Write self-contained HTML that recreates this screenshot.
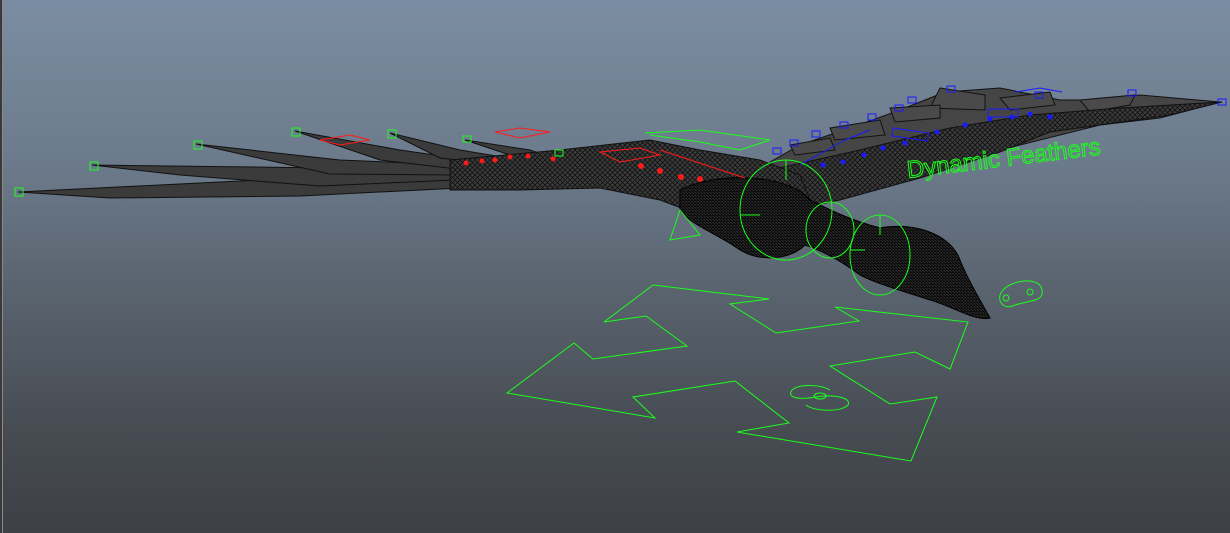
<!DOCTYPE html>
<html><head><meta charset="utf-8"><style>
html,body{margin:0;padding:0;width:1230px;height:533px;overflow:hidden}
body{background:linear-gradient(#7b8da2 0%,#6c7b8c 30%,#59636e 55%,#474c53 80%,#3d4045 100%);position:relative}
.l1{position:absolute;left:0;top:0;width:2px;height:533px;background:#3a3a3a}
.l2{position:absolute;left:2px;top:0;width:1px;height:533px;background:#8a8a8a}
svg{position:absolute;left:0;top:0}
</style></head><body>
<div class="l1"></div><div class="l2"></div>
<svg width="1230" height="533" viewBox="0 0 1230 533">
<defs>
<pattern id="mesh" width="5" height="5" patternUnits="userSpaceOnUse">
<rect width="5" height="5" fill="#3c3c3c"/><path d="M0 0L5 5M0 5L5 0" stroke="#111" stroke-width="0.8"/>
</pattern>
<pattern id="mesh2" width="3" height="3" patternUnits="userSpaceOnUse">
<rect width="3" height="3" fill="#2a2a2a"/><path d="M0 0L3 3M0 3H3" stroke="#000" stroke-width="0.8"/>
</pattern>
</defs>
<!-- left feathers -->
<g fill="#3b3b3b" stroke="#111" stroke-width="1">
<polygon points="18,192 300,178 460,172 460,188 300,196 110,198"/>
<polygon points="92,165 330,168 460,170 455,180 320,186 180,175"/>
<polygon points="196,144 340,160 460,165 455,175 330,174"/>
<polygon points="295,131 400,150 470,160 465,170 380,160"/>
<polygon points="390,133 460,150 520,160 510,166 440,158"/>
<polygon points="465,140 530,150 560,160 540,165"/>
</g>
<!-- right wing feathers layer -->
<polygon points="770,162 800,145 850,128 900,110 945,92 1000,88 1060,100 1100,100 1140,95 1220,102 1160,118 1100,125 1000,150 900,170 800,190" fill="#454545" stroke="#111"/>
<g fill="#4a4a4a" stroke="#111">
<polygon points="940,88 985,95 985,110 930,108"/>
<polygon points="1080,100 1135,95 1130,105 1090,112"/>
<polygon points="1140,110 1220,102 1170,115"/>
<polygon points="1000,98 1050,92 1055,105 1010,110"/>
<polygon points="890,108 940,105 940,118 895,122"/>
<polygon points="830,128 880,120 885,135 835,140"/>
<polygon points="790,145 830,138 835,150 795,155"/>
</g>
<!-- right wing mesh band -->
<polygon points="770,170 860,150 950,128 1030,115 1120,108 1222,102 1170,115 1100,125 1050,132 1000,152 920,178 840,200 790,210" fill="url(#mesh)" stroke="#111"/>
<!-- body/wing main -->
<polygon points="450,160 560,150 650,140 700,150 760,160 800,175 810,200 790,220 740,235 700,215 660,200 600,188 520,190 450,190" fill="url(#mesh)" stroke="#111"/>
<!-- body -->
<path d="M680,190 C720,170 790,175 810,200 C830,210 850,220 880,228 C910,222 950,232 960,260 C968,280 980,300 990,318 C975,322 950,305 930,300 C900,290 880,285 860,275 C840,260 820,250 805,245 C790,260 760,262 740,250 C720,235 690,225 680,210 Z" fill="url(#mesh2)" stroke="#000"/>
<!-- red controls -->
<g stroke="#ff1a1a" fill="none" stroke-width="1">
<polygon points="320,140 350,135 370,140 340,145"/>
<polygon points="495,132 520,128 550,132 520,138"/>
<polygon points="600,152 640,148 660,155 620,162"/>
<line x1="660" y1="150" x2="745" y2="178"/>
</g>
<g fill="#ff1a1a">
<circle cx="466" cy="163" r="2.5"/><circle cx="482" cy="161" r="2.5"/><circle cx="495" cy="160" r="2.5"/><circle cx="510" cy="157" r="2.5"/><circle cx="528" cy="156" r="2.5"/><circle cx="553" cy="159" r="2.5"/><circle cx="641" cy="166" r="3"/><circle cx="660" cy="171" r="3"/><circle cx="681" cy="177" r="3"/><circle cx="700" cy="179" r="3"/>
</g>
<!-- blue controls -->
<g fill="#1a1aff">
<circle cx="823" cy="165" r="2.5"/><circle cx="843" cy="162" r="2.5"/><circle cx="864" cy="155" r="2.5"/><circle cx="883" cy="148" r="2.5"/><circle cx="905" cy="143" r="2.5"/><circle cx="937" cy="132" r="2.5"/><circle cx="965" cy="125" r="2.5"/><circle cx="990" cy="119" r="2.5"/><circle cx="1012" cy="117" r="2.5"/><circle cx="1030" cy="114" r="2.5"/><circle cx="1050" cy="117" r="2.5"/>
</g>
<g stroke="#1a1aff" fill="none">
<rect x="773" y="148" width="8" height="6"/><rect x="790" y="140" width="8" height="6"/><rect x="812" y="131" width="8" height="6"/><rect x="840" y="122" width="8" height="6"/><rect x="868" y="114" width="8" height="6"/><rect x="895" y="105" width="8" height="6"/><rect x="908" y="97" width="8" height="6"/><rect x="947" y="86" width="8" height="6"/><rect x="988" y="109" width="30" height="8"/><rect x="1035" y="92" width="8" height="6"/><rect x="1128" y="90" width="8" height="6"/><rect x="1218" y="99" width="8" height="6"/>
<rect x="893" y="128" width="36" height="8" transform="rotate(8 893 128)"/>
<polyline points="800,165 845,140 870,130"/>
<polyline points="1015,92 1040,88 1062,92"/>
</g>
<!-- green -->
<g stroke="#1aff1a" fill="none" stroke-width="1">
<rect x="15" y="188" width="8" height="8"/><rect x="90" y="162" width="8" height="8"/><rect x="194" y="141" width="8" height="8"/><rect x="292" y="128" width="8" height="8"/><rect x="388" y="130" width="8" height="8"/><rect x="463" y="136" width="8" height="6"/><rect x="555" y="150" width="8" height="6"/>
<polyline points="645,133 700,130 770,140 740,150 700,142 650,135"/>
<ellipse cx="786" cy="210" rx="46" ry="50"/>
<line x1="786" y1="160" x2="786" y2="180"/><line x1="740" y1="215" x2="760" y2="215"/>
<ellipse cx="830" cy="230" rx="24" ry="28"/>
<ellipse cx="880" cy="255" rx="30" ry="40"/>
<line x1="880" y1="215" x2="880" y2="235"/><line x1="850" y1="250" x2="865" y2="250"/>
<polygon points="680,210 700,235 670,240"/>
<polygon points="653,285 769,299 730,304 776,333 859,321 835,307 968,322 950,369 915,352 830,366 890,404 937,397 911,461 737,432 789,423 735,381 633,397 655,418 507,393 574,343 593,359 687,346 646,316 604,322"/>
<path d="M830,390 C822,385 800,383 792,390 C786,398 800,400 815,397 C835,394 852,398 848,405 C842,412 815,412 806,405"/>
<ellipse cx="820" cy="396" rx="6" ry="3"/>
<path d="M1000,295 C1005,280 1040,275 1042,290 C1044,302 1030,300 1015,305 C1005,310 998,303 1000,295Z"/>
<circle cx="1006" cy="298" r="3"/><circle cx="1030" cy="292" r="3"/>
</g>
<text x="908" y="178" transform="rotate(-7 908 178)" font-family="Liberation Sans, sans-serif" font-size="24" fill="none" stroke="#1aff1a" stroke-width="1">Dynamic Feathers</text>
</svg>
</body></html>
